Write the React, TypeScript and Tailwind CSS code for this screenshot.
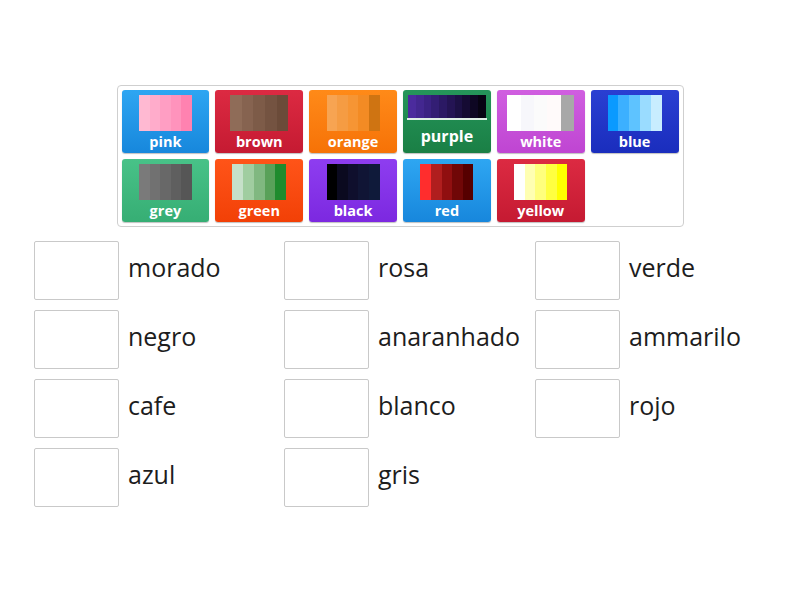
type Tile = {
    label: string;
    bg: string;
    width: string;
    stripes: string[];
    tall?: boolean;
};

const tiles: Tile[] = [
    {
        label: "pink",
        bg: "from-[#2ea6f2] to-[#1787dc]",
        width: "w-[53px]",
        stripes: ["bg-[#ffb9d2]", "bg-[#ffaccb]", "bg-[#ff9ec3]", "bg-[#ff93bc]", "bg-[#ff82b0]"],
    },
    {
        label: "brown",
        bg: "from-[#dc2a42] to-[#c51a32]",
        width: "w-[58px]",
        stripes: ["bg-[#8f6c58]", "bg-[#866350]", "bg-[#7d5b48]", "bg-[#745341]", "bg-[#6b4b39]"],
    },
    {
        label: "orange",
        bg: "from-[#ff8a18] to-[#f67206]",
        width: "w-[53px]",
        stripes: ["bg-[#f7a452]", "bg-[#f59c43]", "bg-[#f69534]", "bg-[#f38b24]", "bg-[#cf7412]"],
    },
    {
        label: "purple",
        bg: "from-[#25955a] to-[#1a7f45]",
        width: "w-[78px]",
        tall: true,
        stripes: [
            "bg-[#4b2b9d]",
            "bg-[#432790]",
            "bg-[#3b2283]",
            "bg-[#331e74]",
            "bg-[#2b1964]",
            "bg-[#241454]",
            "bg-[#1c1044]",
            "bg-[#150b33]",
            "bg-[#0e0723]",
            "bg-[#070312]",
        ],
    },
    {
        label: "white",
        bg: "from-[#d05ee0] to-[#bf45d2]",
        width: "w-[67px]",
        stripes: ["bg-[#ffffff]", "bg-[#f7f7fb]", "bg-[#fbfbfb]", "bg-[#fffafa]", "bg-[#a8a8a8]"],
    },
    {
        label: "blue",
        bg: "from-[#2a3fd2] to-[#1a2dbd]",
        width: "w-[54px]",
        stripes: ["bg-[#0a9aff]", "bg-[#3cb0ff]", "bg-[#5ec3ff]", "bg-[#9adcff]", "bg-[#c8edff]"],
    },
    {
        label: "grey",
        bg: "from-[#48c288] to-[#36ae74]",
        width: "w-[53px]",
        stripes: ["bg-[#7a7a7a]", "bg-[#717171]", "bg-[#686868]", "bg-[#5f5f5f]", "bg-[#565656]"],
    },
    {
        label: "green",
        bg: "from-[#ff5418] to-[#f24006]",
        width: "w-[54px]",
        stripes: ["bg-[#c6e0c9]", "bg-[#a0cda0]", "bg-[#80b880]", "bg-[#59a159]", "bg-[#1f8b2d]"],
    },
    {
        label: "black",
        bg: "from-[#8e3df0] to-[#7c28e0]",
        width: "w-[53px]",
        stripes: ["bg-[#000000]", "bg-[#0b0a1f]", "bg-[#0f0f2d]", "bg-[#101535]", "bg-[#0f1a3a]"],
    },
    {
        label: "red",
        bg: "from-[#2ea6f2] to-[#1787dc]",
        width: "w-[53px]",
        stripes: ["bg-[#ff2d2d]", "bg-[#b01e1e]", "bg-[#900f10]", "bg-[#700707]", "bg-[#560000]"],
    },
    {
        label: "yellow",
        bg: "from-[#dc2a42] to-[#c51a32]",
        width: "w-[53px]",
        stripes: ["bg-[#ffffff]", "bg-[#ffffb2]", "bg-[#ffff7c]", "bg-[#ffff40]", "bg-[#ffff00]"],
    },
];

const columns: string[][] = [
    ["morado", "negro", "cafe", "azul"],
    ["rosa", "anaranhado", "blanco", "gris"],
    ["verde", "ammarilo", "rojo"],
];

function ColorTile({ tile }: { tile: Tile }) {
    return (
        <div
            className={`flex flex-col items-center rounded-[3px] bg-linear-to-b ${tile.bg} pt-[5px] shadow-[0_1px_1px_rgba(0,0,0,0.25)]`}
        >
            <div className={`flex ${tile.width} ${tile.tall ? "h-[23px]" : "h-[36px]"}`}>
                {tile.stripes.map((s, i) => (
                    <div key={i} className={`flex-1 ${s}`} />
                ))}
            </div>
            {tile.tall && <div className="w-[80px] h-[2px] bg-white/85" />}
            {tile.tall ? (
                <div className="mt-[7px] text-[16px] leading-[18px] font-bold text-white">{tile.label}</div>
            ) : (
                <div className="mt-[3px] text-[14.5px] leading-[16px] font-bold text-white">{tile.label}</div>
            )}
        </div>
    );
}

function Answer({ word }: { word: string }) {
    return (
        <div className="flex items-center h-[59px]">
            <div className="w-[85px] h-[59px] border border-[#c9c9c9] rounded-[2px] bg-white" />
            <span className="ml-[9px] text-[25px] leading-[30px] text-[#1d1d1d] -mt-[8px]">{word}</span>
        </div>
    );
}

export default function App() {
    return (
        <div className="w-[800px] h-[600px] bg-white font-['Open_Sans',sans-serif]">
            <div className="flex justify-center pt-[85px]">
                <div className="w-[567px] h-[142px] border border-[#cfcfcf] rounded-[4px] p-[4px] grid grid-cols-6 auto-rows-[63px] gap-[6px]">
                    {tiles.map((t) => (
                        <ColorTile key={t.label} tile={t} />
                    ))}
                </div>
            </div>

            <div className="grid grid-cols-[250px_251px_250px] pl-[34px] mt-[14px]">
                {columns.map((col, ci) => (
                    <div key={ci} className="flex flex-col gap-[10px]">
                        {col.map((w) => (
                            <Answer key={w} word={w} />
                        ))}
                    </div>
                ))}
            </div>
        </div>
    );
}
